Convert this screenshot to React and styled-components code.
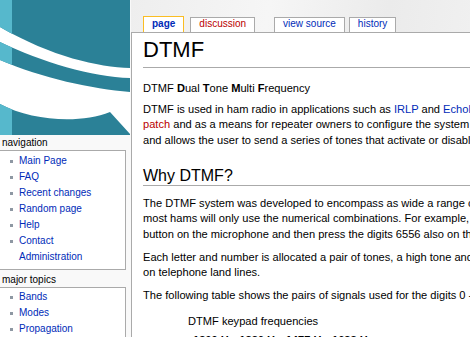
import React from "react";
import styled, { createGlobalStyle } from "styled-components";

const GlobalStyle = createGlobalStyle`
  html, body { margin: 0; padding: 0; }
  body {
    background: #f9f9f9;
    font-family: "Liberation Sans", Arial, sans-serif;
    overflow: hidden;
  }
`;

const Page = styled.div`
  display: flex;
  width: 470px;
  height: 337px;
  overflow: hidden;
  background: #f9f9f9;
`;

const Side = styled.aside`
  width: 131px;
  flex-shrink: 0;
  display: flex;
  flex-direction: column;
`;

const Logo = styled.svg`
  display: block;
  width: 130px;
  height: 135px;
  flex-shrink: 0;
`;

const PortletHead = styled.h5`
  margin: ${(p) => p.$mt}px 0 0 0;
  padding: 0 0 0 2px;
  height: 14px;
  font-size: 10px;
  line-height: 14px;
  font-weight: normal;
  color: #000;
`;

const PortletBody = styled.ul`
  margin: 0 5px 0 0;
  list-style: none;
  background: #fff;
  border: 1px solid #aaa;
  border-left: none;
  padding: ${(p) => p.$pt}px 0 4px 10px;
`;

const NavItem = styled.li`
  display: flex;
  align-items: flex-start;
  font-size: 10px;
  line-height: 16px;
`;

const Bullet = styled.span`
  width: 3px;
  height: 3px;
  margin: 7px 6px 0 0;
  flex-shrink: 0;
  background: #8e98a3;
`;

const NavLink = styled.a`
  color: #002bb8;
  text-decoration: none;
`;

const Main = styled.main`
  flex: 1;
  min-width: 0;
  display: flex;
  flex-direction: column;
  background: linear-gradient(100deg, #eeeeee 0%, #f6f6f6 35%, #ebebeb 65%, #f3f3f3 100%);
`;

const TabBar = styled.ul`
  display: flex;
  align-items: flex-end;
  height: 32px;
  margin: 0;
  padding: 0 0 0 12px;
  list-style: none;
  flex-shrink: 0;
`;

const Tab = styled.li`
  margin-left: ${(p) => p.$ml}px;
  background: #fff;
  border: 1px solid ${(p) => (p.$selected ? "#fabd23" : "#aaa")};
  border-bottom: none;
  padding: ${(p) => (p.$selected ? "1px 8px 2px" : "0 8px 2px")};
  font-size: 10px;
  line-height: 12px;
  font-weight: ${(p) => (p.$selected ? "bold" : "normal")};
  color: ${(p) => (p.$new ? "#ba0000" : "#002bb8")};
  white-space: nowrap;
`;

const Content = styled.div`
  flex: 1;
  width: 700px;
  background: #fff;
  border-top: 1px solid #aaa;
  border-left: 1px solid #aaa;
  padding: 4px 0 0 11px;
  color: #000;
`;

const Title = styled.h1`
  margin: 0;
  padding: 0 0 4px 0;
  font-size: 22px;
  line-height: 26px;
  font-weight: normal;
  border-bottom: 1px solid #aaa;
`;

const Heading = styled.h2`
  margin: ${(p) => p.$mt}px 0 0 0;
  padding: 0;
  font-size: 16px;
  line-height: 18px;
  font-weight: normal;
  border-bottom: 1px solid #aaa;
`;

const Para = styled.p`
  margin: ${(p) => p.$mt}px 0 0 0;
  font-size: 11.1px;
  line-height: 15.5px;
  white-space: nowrap;
`;

const Link = styled.a`
  color: ${(p) => (p.$new ? "#ba0000" : "#002bb8")};
  text-decoration: none;
`;

const KeyTable = styled.table`
  margin: 11px 0 0 45px;
  border-collapse: collapse;
  font-size: 11.1px;
  line-height: 15.5px;
`;

const Caption = styled.caption`
  text-align: left;
  white-space: nowrap;
  padding-bottom: 3px;
`;

const HeadCell = styled.th`
  padding: 0 5px 0 0;
  font-weight: bold;
  text-align: left;
  white-space: nowrap;
  &:first-child { padding-left: 5px; }
`;

const navItems = [
  ["Main Page"],
  ["FAQ"],
  ["Recent changes"],
  ["Random page"],
  ["Help"],
  ["Contact", "Administration"],
];

const topicItems = [["Bands"], ["Modes"], ["Propagation"]];

function LogoArt() {
  const shapes = (
    <>
      <path d="M0 0H130V68C98 67 52 57 0 27Z" />
      <path d="M0 42C42 62 92 77 130 78V92C92 89 42 78 0 60Z" />
      <path d="M0 104C32 121 80 124 110 112L130 134V135H0Z" />
    </>
  );
  return (
    <Logo viewBox="0 0 130 135" aria-label="logo">
      <defs>
        <clipPath id="leftStrip">
          <rect x="0" y="0" width="12" height="135" />
        </clipPath>
      </defs>
      <rect width="130" height="135" fill="#fff" />
      <g fill="#2b8197">{shapes}</g>
      <g fill="#56b8cc" clipPath="url(#leftStrip)">{shapes}</g>
    </Logo>
  );
}

function Portlet({ title, items, mt, pt }) {
  return (
    <>
      <PortletHead $mt={mt}>{title}</PortletHead>
      <PortletBody $pt={pt}>
        {items.map((lines) => (
          <NavItem key={lines[0]}>
            <Bullet />
            <NavLink href="#">
              {lines.map((l, i) => (
                <React.Fragment key={l}>
                  {i > 0 && <br />}
                  {l}
                </React.Fragment>
              ))}
            </NavLink>
          </NavItem>
        ))}
      </PortletBody>
    </>
  );
}

export default function App() {
  return (
    <>
      <GlobalStyle />
      <Page>
        <Side>
          <LogoArt />
          <Portlet title="navigation" items={navItems} mt={1} pt={2} />
          <Portlet title="major topics" items={topicItems} mt={3} pt={1} />
        </Side>
        <Main>
          <TabBar>
            <Tab $selected $ml={0}>page</Tab>
            <Tab $new $ml={6}>discussion</Tab>
            <Tab $ml={19}>view source</Tab>
            <Tab $ml={4}>history</Tab>
          </TabBar>
          <Content>
            <Title>DTMF</Title>
            <Para $mt={13}>
              DTMF <b>D</b>ual <b>T</b>one <b>M</b>ulti <b>F</b>requency
            </Para>
            <Para $mt={5}>
              DTMF is used in ham radio in applications such as <Link href="#">IRLP</Link> and{" "}
              <Link href="#">Echolink</Link>, to control a phone
              <br />
              <Link href="#" $new>patch</Link> and as a means for repeater owners to configure the system remotely,
              <br />
              and allows the user to send a series of tones that activate or disable features.
            </Para>
            <Heading $mt={18.5}>Why DTMF?</Heading>
            <Para $mt={10}>
              The DTMF system was developed to encompass as wide a range of characters as possible, though
              <br />
              most hams will only use the numerical combinations. For example, to access the autopatch you press the
              <br />
              button on the microphone and then press the digits 6556 also on the keypad.
            </Para>
            <Para $mt={7.5}>
              Each letter and number is allocated a pair of tones, a high tone and a low tone, just as they are
              <br />
              on telephone land lines.
            </Para>
            <Para $mt={7.3}>
              The following table shows the pairs of signals used for the digits 0 - 9 and the letters A - D.
            </Para>
            <KeyTable>
              <Caption>DTMF keypad frequencies</Caption>
              <thead>
                <tr>
                  <HeadCell>1209 Hz</HeadCell>
                  <HeadCell>1336 Hz</HeadCell>
                  <HeadCell>1477 Hz</HeadCell>
                  <HeadCell>1633 Hz</HeadCell>
                </tr>
              </thead>
            </KeyTable>
          </Content>
        </Main>
      </Page>
    </>
  );
}
